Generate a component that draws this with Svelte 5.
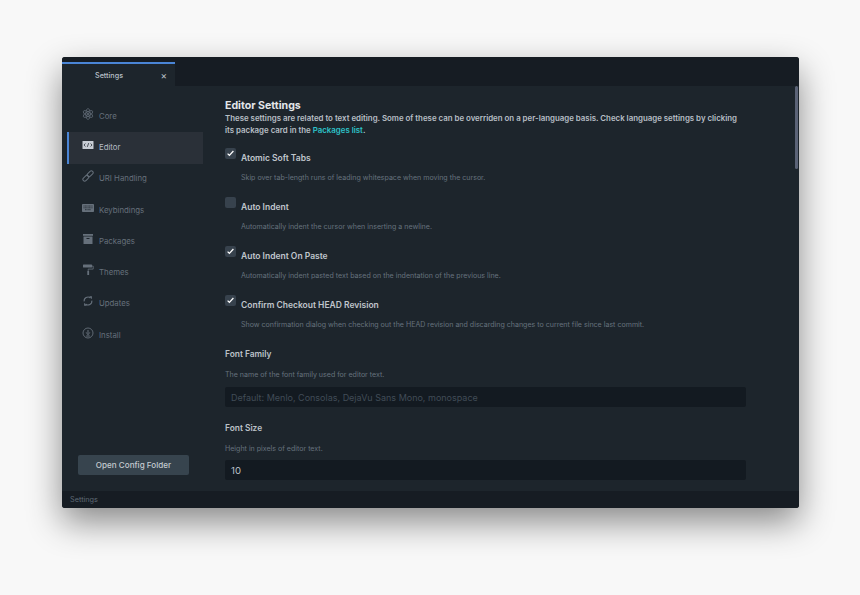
<script>
  const nav = [
    { label: 'Core', icon: 'core' },
    { label: 'Editor', icon: 'editor', active: true },
    { label: 'URI Handling', icon: 'link' },
    { label: 'Keybindings', icon: 'keys' },
    { label: 'Packages', icon: 'box' },
    { label: 'Themes', icon: 'paint' },
    { label: 'Updates', icon: 'sync' },
    { label: 'Install', icon: 'install' }
  ];
  const checks = [
    { title: 'Atomic Soft Tabs', on: true, desc: 'Skip over tab-length runs of leading whitespace when moving the cursor.' },
    { title: 'Auto Indent', on: false, desc: 'Automatically indent the cursor when inserting a newline.' },
    { title: 'Auto Indent On Paste', on: true, desc: 'Automatically indent pasted text based on the indentation of the previous line.' },
    { title: 'Confirm Checkout HEAD Revision', on: true, desc: 'Show confirmation dialog when checking out the HEAD revision and discarding changes to current file since last commit.' }
  ];
</script>

<div class="page">
  <div class="window">
    <div class="tabbar">
      <div class="tab">
        <span class="tab-title">Settings</span>
        <span class="tab-close">×</span>
      </div>
    </div>
    <div class="body">
      <aside class="sidebar">
        <nav class="nav">
          {#each nav as item}
            <div class="nav-item" class:active={item.active}>
              <svg class="icon" viewBox="0 0 12 12" aria-hidden="true">
                {#if item.icon === 'core'}
                  <g fill="none" stroke="currentColor" stroke-width=".7">
                    <ellipse cx="6" cy="6" rx="5.4" ry="2.1" transform="rotate(90 6 6)" />
                    <ellipse cx="6" cy="6" rx="5.4" ry="2.1" transform="rotate(30 6 6)" />
                    <ellipse cx="6" cy="6" rx="5.4" ry="2.1" transform="rotate(150 6 6)" />
                  </g>
                  <circle cx="6" cy="6" r="1" fill="currentColor" />
                {:else if item.icon === 'editor'}
                  <rect x="0.5" y="2" width="11" height="8" rx=".6" fill="#c9ced6" />
                  <path d="M3.4 4.5 2 6l1.4 1.5M8.6 4.5 10 6 8.6 7.5M6.7 4.1 5.3 7.9" fill="none" stroke="#2a3038" stroke-width=".8" />
                {:else if item.icon === 'link'}
                  <g fill="none" stroke="currentColor" stroke-width="1" transform="rotate(-45 6 6)">
                    <rect x="-.5" y="4.2" width="6.8" height="3.6" rx="1.8" />
                    <rect x="5.7" y="4.2" width="6.8" height="3.6" rx="1.8" />
                  </g>
                {:else if item.icon === 'keys'}
                  <rect x="0" y="2" width="12" height="8" rx=".8" fill="currentColor" />
                  <path d="M1.5 4h9M1.5 5.8h9M3 7.7h6" stroke="#1d252c" stroke-width=".8" stroke-dasharray="1 .4" />
                {:else if item.icon === 'box'}
                  <rect x="1" y="1" width="10" height="1.8" fill="currentColor" />
                  <path d="M1.5 3.6h9V11h-9zM4.5 5h3v1h-3z" fill="currentColor" fill-rule="evenodd" />
                {:else if item.icon === 'paint'}
                  <rect x="1" y="0.6" width="9" height="3" rx=".5" fill="currentColor" />
                  <path d="M10 2.1h1.2v3H6.2v2" fill="none" stroke="currentColor" stroke-width=".8" />
                  <rect x="5.3" y="7" width="1.8" height="4" fill="currentColor" />
                {:else if item.icon === 'sync'}
                  <g fill="none" stroke="currentColor" stroke-width="1.1">
                    <path d="M2.2 6.4A3.8 3.8 0 0 1 8.5 3" />
                    <path d="M9.8 5.6A3.8 3.8 0 0 1 3.5 9" />
                  </g>
                  <path d="M7.3 1.2h2.6v3zM4.7 10.8H2.1v-3z" fill="currentColor" />
                {:else}
                  <circle cx="6" cy="6" r="5" fill="none" stroke="currentColor" stroke-width=".9" />
                  <path d="M6 3v3.4M4.2 5.4 6 7.8l1.8-2.4M4.2 9h3.6" fill="none" stroke="currentColor" stroke-width="1" />
                {/if}
              </svg>
              <span class="nav-label">{item.label}</span>
            </div>
          {/each}
        </nav>
        <button class="config" type="button">Open Config Folder</button>
      </aside>
      <main class="content">
        <h1>Editor Settings</h1>
        <p class="intro">These settings are related to text editing. Some of these can be overriden on a per-language basis. Check language settings by clicking its package card in the <span class="accent">Packages list</span>.</p>
        {#each checks as c}
          <div class="check">
            <div class="check-head">
              <span class="box">
                {#if c.on}
                  <svg viewBox="0 0 11 11" aria-hidden="true"><path d="M2.6 5.6 4.4 7.4 8.4 3" fill="none" stroke="#fff" stroke-width="1.3" /></svg>
                {/if}
              </span>
              <span class="check-title">{c.title}</span>
            </div>
            <p class="desc indented">{c.desc}</p>
          </div>
        {/each}
        <div class="field first">
          <div class="field-title">Font Family</div>
          <p class="desc">The name of the font family used for editor text.</p>
          <div class="input placeholder">Default: Menlo, Consolas, DejaVu Sans Mono, monospace</div>
        </div>
        <div class="field second">
          <div class="field-title">Font Size</div>
          <p class="desc">Height in pixels of editor text.</p>
          <div class="input value">10</div>
        </div>
      </main>
      <div class="thumb"></div>
    </div>
    <footer class="status">Settings</footer>
  </div>
</div>

<style>
  :global(body) { margin: 0; background: #f8f8f8; }
  .page {
    width: 860px; height: 595px; box-sizing: border-box; overflow: hidden;
    padding: 57px 61px 87px 62px; background: #f8f8f8;
    font-family: Inter, "Liberation Sans", sans-serif;
  }
  .window {
    height: 451px; display: flex; flex-direction: column; overflow: hidden;
    background: #1d252c; border-radius: 3px;
    box-shadow: 0 14px 34px rgba(0,0,0,.45);
  }
  .tabbar { height: 29px; box-sizing: border-box; padding-top: 5px; flex: none; background: #161c23; display: flex; }
  .tab {
    width: 113px; box-sizing: border-box; border-top: 2px solid #4a85d6; background: #1d252c;
    display: flex; align-items: center; justify-content: space-between; padding: 0 8px 0 33px;
  }
  .tab-title { font-size: 7.2px; font-weight: 500; color: #b9c0c8; }
  .tab-close { font-size: 10px; line-height: 1; color: #b9c0c8; }
  .body { flex: 1; min-height: 0; display: flex; position: relative; }
  .sidebar { width: 141px; box-sizing: border-box; flex: none; padding: 15px 0 16px 5px; display: flex; flex-direction: column; }
  .nav { flex: 1; display: flex; flex-direction: column; }
  .nav-item {
    height: 31.3px; box-sizing: border-box; padding: 0 0 2px 13px; display: flex; align-items: center; gap: 5px;
    color: #66707b; border-left: 2px solid transparent;
  }
  .nav-item.active { background: #2a3038; border-left-color: #4a85d6; color: #b4bbc4; }
  .icon { width: 12px; height: 12px; flex: none; position: relative; top: -2px; }
  .nav-label { font-size: 7.8px; line-height: 10px; }
  .config {
    margin: 0 14px 0 11px; height: 20px; padding: 0; border: 0; border-radius: 2px;
    background: #37444e; color: #c4cad0; font: 500 8.1px Inter, "Liberation Sans", sans-serif;
  }
  .content { flex: 1; min-width: 0; padding: 13px 53px 0 22px; overflow: hidden; }
  h1 { margin: 0; font-size: 10.6px; line-height: 13px; font-weight: 700; color: #e3e6e9; }
  .intro { margin: 0; max-width: 516px; font-size: 7.87px; line-height: 12px; font-weight: 600; color: #b8bfc6; }
  .accent { color: #2dc3c9; }
  .check { height: 49px; box-sizing: border-box; padding-top: 12px; }
  .check-head { display: flex; height: 25px; }
  .box { width: 11px; height: 11px; flex: none; border-radius: 2px; background: #37424d; display: block; }
  .box svg { display: block; width: 11px; height: 11px; }
  .check-title { margin: 5px 0 0 5px; font-size: 8.5px; line-height: 11px; font-weight: 600; color: #c0c6cc; }
  .desc { margin: 0; font-size: 7.07px; line-height: 10px; color: #66727d; white-space: nowrap; }
  .indented { margin-left: 16px; }
  .field.first { margin-top: 17px; margin-bottom: 16px; }
  .field-title { font-size: 8.4px; line-height: 11px; font-weight: 600; color: #bcc2c8; margin-bottom: 10px; }
  .field .desc { margin-bottom: 7px; }
  .field.second .desc { margin-bottom: 6px; }
  .input {
    height: 20px; box-sizing: border-box; padding: 0 6px; background: #131a21; border-radius: 2px;
    display: flex; align-items: center; font-size: 9px; color: #bcc2c8;
  }
  .value { font-size: 9.6px; }
  .placeholder { color: #414c57; }
  .thumb { position: absolute; top: 0; right: 1px; width: 3px; height: 83px; background: #5b6377; border-radius: 2px; }
  .status {
    height: 17px; flex: none; background: #161c23; color: #5f6a75; font-size: 7.3px; line-height: 17px; padding-left: 8px;
  }
</style>
